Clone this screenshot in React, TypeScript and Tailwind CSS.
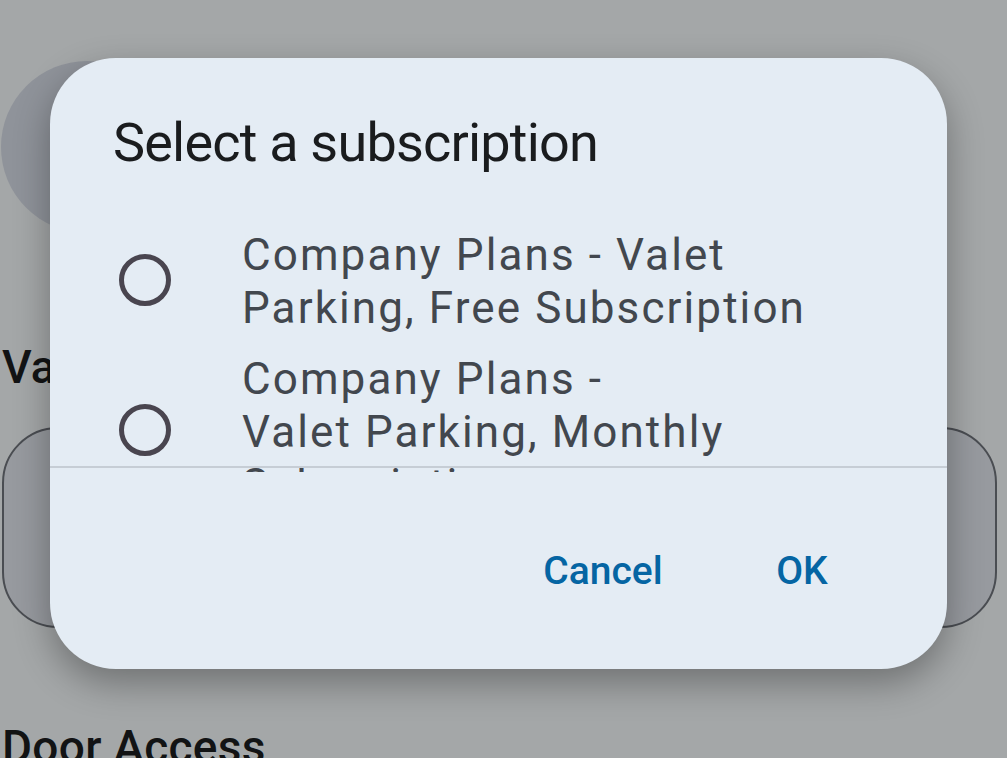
import React from 'react'

const items = [
  ['Company Plans - Valet', 'Parking, Free Subscription'],
  ['Company Plans -', 'Valet Parking, Monthly', 'Subscription'],
]

function Radio() {
  return <div className="w-[52px] h-[52px] shrink-0 rounded-full border-[5px] border-[#49454f] mb-[5px]" />
}

export default function App() {
  return (
    <div className="relative w-[1007px] h-[758px] overflow-hidden bg-[#a4a7a8]" style={{ fontFamily: 'Roboto, "Noto Sans", sans-serif' }}>
      {/* page under the scrim */}
      <div className="flex flex-col">
        <div className="mt-[61px] ml-[1px] w-[172px] h-[172px] rounded-full bg-[#8f939a]" />
        <div className="mt-[107px] ml-[2px] text-[46px] leading-[54px] font-medium text-[#121314] whitespace-nowrap">Valet Parking Plan</div>
        <div className="mt-[33px] mx-[2px] w-[995px] h-[201px] rounded-[56px] border-2 border-[#4a4d52] bg-[#979a9f]" />
        <div className="mt-[92px] ml-[2px] text-[46px] leading-[54px] font-medium tracking-[0.3px] text-[#121314] whitespace-nowrap">Door Access</div>
      </div>

      {/* dialog */}
      <div className="absolute left-[50px] top-[58px] w-[897px] h-[611px] rounded-[66px] bg-[#e4ecf4] shadow-[0_14px_36px_rgba(0,0,0,0.32)] flex flex-col overflow-hidden">
        <div className="pt-[53px] pl-[63px] text-[54px] leading-[64px] tracking-[-0.8px] text-[#1a1c1e] whitespace-nowrap">Select a subscription</div>
        <div className="relative mt-[45px] h-[252px] overflow-hidden">
          <div className="flex flex-col">
            {items.map((lines, i) => (
              <div key={i} className="flex items-center py-[9px] pl-[69px] gap-[71px]">
                <Radio />
                <div className="text-[44px] leading-[53px] tracking-[2.1px] text-[#42474e]">
                  {lines.map((l, j) => (
                    <div key={j} className="whitespace-nowrap">{l}</div>
                  ))}
                </div>
              </div>
            ))}
          </div>
          <div className="absolute left-0 right-0 bottom-[4px] h-[2px] bg-[#c6cdd5]" />
        </div>
        <div className="flex justify-end pt-[51px] pr-[70px] gap-[49px]">
          <button className="w-[150px] h-[96px] flex items-center justify-center text-[39px] font-medium text-[#0565a3]">Cancel</button>
          <button className="w-[150px] h-[96px] flex items-center justify-center text-[39px] font-medium text-[#0565a3]">OK</button>
        </div>
      </div>
    </div>
  )
}
